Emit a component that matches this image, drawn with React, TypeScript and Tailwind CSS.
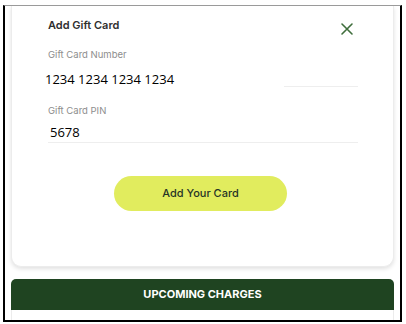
import React from "react";

export default function App() {
  return (
    <div className="w-[406px] h-[324px] bg-white pt-[5px] pl-[3px] pr-[4px] pb-[2px]">
      <div className="w-full h-full border-2 border-black border-t border-t-[#9a9a9a] flex flex-col px-[6px] overflow-hidden">
        <div className="h-[261px] shrink-0 bg-white rounded-b-[10px] border-x border-b border-[#ececec] shadow-[0_2px_4px_rgba(0,0,0,0.12)] pl-[36px] pr-[35px] pt-[11px] flex flex-col" style={{ fontFamily: "Inter, 'Noto Sans', sans-serif" }}>
          <div className="flex items-start justify-between h-[28px]">
            <span className="text-[11px] font-semibold text-[#2f2f2f] leading-[16px]">Add Gift Card</span>
            <svg width="14" height="14" viewBox="0 0 14 14" className="mt-[5px] mr-[4px]">
              <path d="M2 2 L12 12 M12 2 L2 12" stroke="#3f6e3c" strokeWidth="1.6" strokeLinecap="round" />
            </svg>
          </div>
          <div className="text-[9.5px] text-[#8d8d8d] leading-[14px] mt-[3px]">Gift Card Number</div>
          <div className="flex items-end h-[26px]">
            <span className="ml-[-3px] text-[13px] text-black leading-[18px] w-[239px]" style={{ fontFamily: "'Open Sans', 'Noto Sans', sans-serif" }}>1234 1234 1234 1234</span>
            <div className="flex-1 border-b border-[#eeeeee] mb-[1px]" />
          </div>
          <div className="text-[9.5px] text-[#8d8d8d] leading-[14px] mt-[16px]">Gift Card PIN</div>
          <div className="h-[25px] flex items-end border-b border-[#eeeeee]">
            <span className="ml-[2px] text-[13px] text-black leading-[18px] mb-[1px]" style={{ fontFamily: "'Open Sans', 'Noto Sans', sans-serif" }}>5678</span>
          </div>
          <div className="flex justify-center mt-[33px]">
            <button className="w-[173px] h-[35px] rounded-full bg-[#e1ec5e] text-[11px] font-medium text-[#263426] ml-[-5px]">Add Your Card</button>
          </div>
        </div>
        <div className="mt-[12px] h-[31px] shrink-0 bg-[#1f4421] rounded-t-[5px] flex items-center justify-center" style={{ fontFamily: "Inter, 'Noto Sans', sans-serif" }}>
          <span className="text-[11px] font-bold text-white tracking-[0px]">UPCOMING CHARGES</span>
        </div>
        <div className="flex-1 border-x border-[#ececec]" />
      </div>
    </div>
  );
}
